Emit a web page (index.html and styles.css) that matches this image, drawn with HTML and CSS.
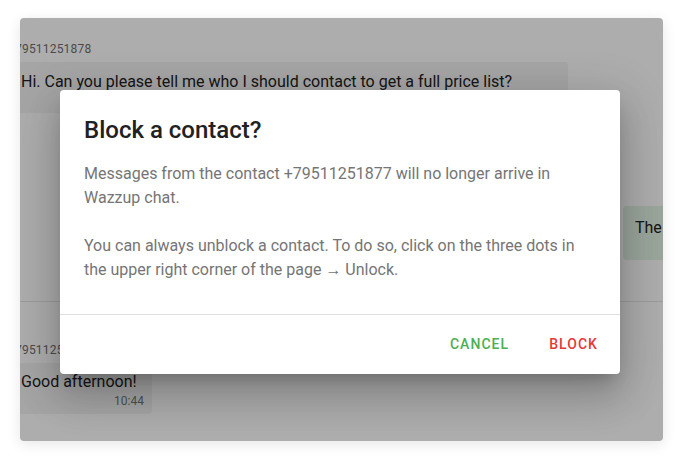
FILE: index.html
```html
<!DOCTYPE html>
<html>
<head>
<meta charset="utf-8">
<link rel="stylesheet" href="styles.css">
</head>
<body>
<div class="card">
  <div class="chat">
    <div class="section">
      <div class="sender">+79511251878</div>
      <div class="bubble in wide">
        <div class="msg">Hi. Can you please tell me who I should contact to get a full price list?</div>
        <div class="time">10:41</div>
      </div>
      <div class="bubble out">
        <div class="msg">The price list has been sent to you</div>
        <div class="time">10:42</div>
      </div>
    </div>
    <div class="section second">
      <div class="sender">+79511251877</div>
      <div class="bubble in small">
        <div class="msg">Good afternoon!</div>
        <div class="time">10:44</div>
      </div>
    </div>
  </div>
  <div class="overlay"></div>
  <div class="dialog">
    <div class="dialog-body">
      <h2 class="title">Block a contact?</h2>
      <p class="text">Messages from the contact +79511251877 will no longer arrive in Wazzup chat.</p>
      <p class="text">You can always unblock a contact. To do so, click on the three dots in the upper right corner of the page → Unlock.</p>
    </div>
    <div class="actions">
      <button class="btn cancel">Cancel</button>
      <button class="btn block">Block</button>
    </div>
  </div>
</div>
</body>
</html>
```
FILE: styles.css
```css
* { box-sizing: border-box; }
html, body { margin: 0; padding: 0; background: #fff; }
body {
  font-family: Roboto, "Noto Sans", Arial, sans-serif;
  width: 683px;
  height: 464px;
  padding: 18px 20px 0 20px;
}
.card {
  position: relative;
  width: 643px;
  height: 423px;
  border-radius: 4px;
  overflow: hidden;
  background: #fff;
  box-shadow: 0 3px 14px rgba(0,0,0,0.10);
}
.chat {
  margin-left: -12px;
  width: 700px;
}
.section { padding-top: 24px; height: 284px; border-bottom: 1px solid #e6e6e6; }
.section.second { padding-top: 41px; border-bottom: none; }
.sender {
  font-size: 12px;
  line-height: 14px;
  color: #6f6f6f;
  letter-spacing: 0.2px;
  margin-bottom: 6px;
}
.bubble {
  background: #f4f4f4;
  border-radius: 4px;
  padding: 9px 8px 4px 13px;
}
.bubble.wide { width: 560px; height: 51px; }
.bubble.small { width: 144px; height: 51px; padding-top: 8px; }
.bubble.out {
  background: #e4f4e6;
  margin-left: 615px;
  margin-top: 93px;
  width: 300px;
  height: 54px;
  padding: 11px 12px 8px 12px;
}
.msg { font-size: 16px; line-height: 22px; color: #222; white-space: nowrap; }
.time { font-size: 12px; line-height: 16px; color: #777; text-align: right; }
.overlay {
  position: absolute;
  inset: 0;
  background: rgba(0,0,0,0.32);
}
.dialog {
  position: absolute;
  left: 40px;
  top: 72px;
  width: 560px;
  height: 284px;
  background: #fff;
  border-radius: 4px;
  box-shadow: 0 11px 15px -7px rgba(0,0,0,0.2), 0 24px 38px 3px rgba(0,0,0,0.14), 0 9px 46px 8px rgba(0,0,0,0.12);
  display: flex;
  flex-direction: column;
}
.dialog-body {
  padding: 24px 24px 0 24px;
  height: 225px;
  border-bottom: 1px solid #e0e0e0;
}
.title {
  margin: 0 0 16px 0;
  font-size: 24px;
  line-height: 32px;
  font-weight: 500;
  color: #212121;
}
.text {
  margin: 0 0 24px 0;
  font-size: 16px;
  line-height: 24px;
  color: #757575;
}
.actions {
  flex: 1;
  display: flex;
  justify-content: flex-end;
  align-items: center;
  padding: 0 6px 2px 0;
}
.btn {
  background: none;
  border: none;
  font-family: Roboto, Arial, sans-serif;
  font-size: 14px;
  font-weight: 500;
  letter-spacing: 1.05px;
  text-transform: uppercase;
  padding: 6px 16px;
  margin-left: 8px;
  cursor: pointer;
}
.cancel { color: #4caf50; }
.block { color: #e53935; }
```
